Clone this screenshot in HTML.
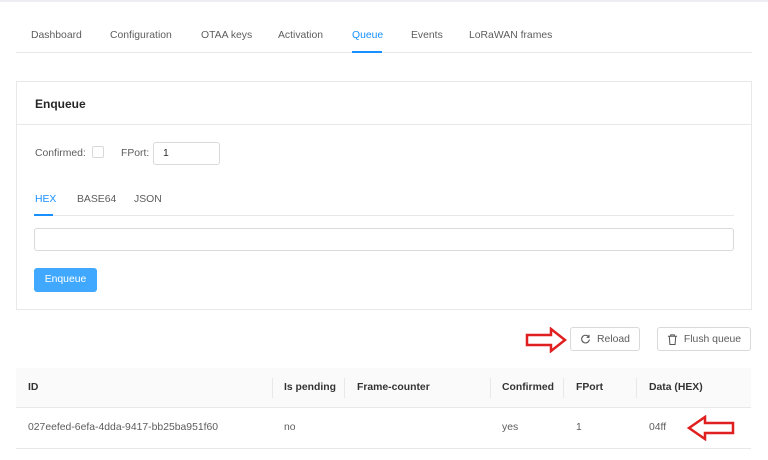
<!DOCTYPE html>
<html><head><style>
*{margin:0;padding:0;box-sizing:border-box}
body{width:768px;height:460px;background:#fff;font-family:"Liberation Sans",sans-serif;font-size:10.4px;color:rgba(0,0,0,.65);position:relative;overflow:hidden}
.a{position:absolute;white-space:nowrap}
.tab{top:30px}
.th{font-weight:bold;color:rgba(0,0,0,.8);top:382px}
.td{top:422px}
.sep{position:absolute;width:1px;height:20px;top:378px;background:#e8e8e8}
.btn{position:absolute;border:1px solid #d9d9d9;border-radius:3px;background:#fff;height:24px;top:327px;font-size:10.4px;color:rgba(0,0,0,.65);display:flex;align-items:center;justify-content:center;gap:6px}
</style></head><body>
<div class="a" style="left:0;top:0;width:768px;height:2px;background:#eeeef2"></div>
<div class="a tab" style="left:31px">Dashboard</div>
<div class="a tab" style="left:110px">Configuration</div>
<div class="a tab" style="left:201px">OTAA keys</div>
<div class="a tab" style="left:278px">Activation</div>
<div class="a tab" style="left:352px;color:#1890ff">Queue</div>
<div class="a tab" style="left:411px">Events</div>
<div class="a tab" style="left:469px">LoRaWAN frames</div>
<div class="a" style="left:16px;top:52px;width:736px;height:1px;background:#e8e8e8"></div>
<div class="a" style="left:352px;top:51px;width:30px;height:2px;background:#1890ff"></div>

<div class="a" style="left:16px;top:81px;width:736px;height:229px;border:1px solid #e8e8e8"></div>
<div class="a" style="left:35px;top:97px;font-size:12px;font-weight:bold;color:rgba(0,0,0,.85)">Enqueue</div>
<div class="a" style="left:17px;top:124px;width:734px;height:1px;background:#e8e8e8"></div>
<div class="a" style="left:35px;top:148px">Confirmed:</div>
<div class="a" style="left:92px;top:146px;width:12px;height:12px;border:1px solid #d9d9d9;border-radius:2px"></div>
<div class="a" style="left:121px;top:148px">FPort:</div>
<div class="a" style="left:153px;top:142px;width:67px;height:23px;border:1px solid #d9d9d9;border-radius:3px;padding:5px 0 0 9px;color:rgba(0,0,0,.85)">1</div>
<div class="a" style="left:35px;top:194px;color:#1890ff">HEX</div>
<div class="a" style="left:77px;top:194px">BASE64</div>
<div class="a" style="left:134px;top:194px">JSON</div>
<div class="a" style="left:35px;top:215px;width:699px;height:1px;background:#e8e8e8"></div>
<div class="a" style="left:34px;top:214px;width:19px;height:2px;background:#1890ff"></div>
<div class="a" style="left:34px;top:228px;width:700px;height:23px;border:1px solid #d9d9d9;border-radius:3px"></div>
<div class="a" style="left:34px;top:268px;width:63px;height:24px;background:#40a9ff;border-radius:3px;color:#fff;text-align:center;line-height:24px">Enqueue</div>

<div class="btn" style="left:570px;width:70px"><svg width="11" height="11" viewBox="0 0 12 12"><path d="M9.5 3.2A4.2 4.2 0 1 0 10.2 6" fill="none" stroke="#555" stroke-width="1.2"/><path d="M9.8 1v2.6H7.2" fill="none" stroke="#555" stroke-width="1.2"/></svg>Reload</div>
<div class="btn" style="left:657px;width:94px"><svg width="11" height="11" viewBox="0 0 12 12"><path d="M1 2.5h10M4 2.5V1h4v1.5M2.5 2.5l.7 9h5.6l.7-9" fill="none" stroke="#555" stroke-width="1.1"/></svg>Flush queue</div>
<svg class="a" style="left:524px;top:327px" width="44" height="26" viewBox="0 0 44 26"><path d="M3 8h24V2l14 11-14 11v-6H3z" fill="none" stroke="#e02020" stroke-width="2.5"/></svg>
<svg class="a" style="left:686px;top:415px" width="50" height="26" viewBox="0 0 50 26"><path d="M47 8H19V2L3 13l16 11v-6h28z" fill="none" stroke="#e02020" stroke-width="2.5"/></svg>

<div class="a" style="left:16px;top:368px;width:735px;height:40px;background:#fafafa;border-bottom:1px solid #e8e8e8"></div>
<div class="sep" style="left:272px"></div><div class="sep" style="left:344px"></div><div class="sep" style="left:490px"></div><div class="sep" style="left:563px"></div><div class="sep" style="left:636px"></div>
<div class="a th" style="left:28px">ID</div>
<div class="a th" style="left:284px">Is pending</div>
<div class="a th" style="left:357px">Frame-counter</div>
<div class="a th" style="left:502px">Confirmed</div>
<div class="a th" style="left:576px">FPort</div>
<div class="a th" style="left:649px">Data (HEX)</div>
<div class="a td" style="left:28px">027eefed-6efa-4dda-9417-bb25ba951f60</div>
<div class="a td" style="left:284px">no</div>
<div class="a td" style="left:502px">yes</div>
<div class="a td" style="left:576px">1</div>
<div class="a td" style="left:649px">04ff</div>
<div class="a" style="left:16px;top:448px;width:735px;height:1px;background:#e8e8e8"></div>
</body></html>
